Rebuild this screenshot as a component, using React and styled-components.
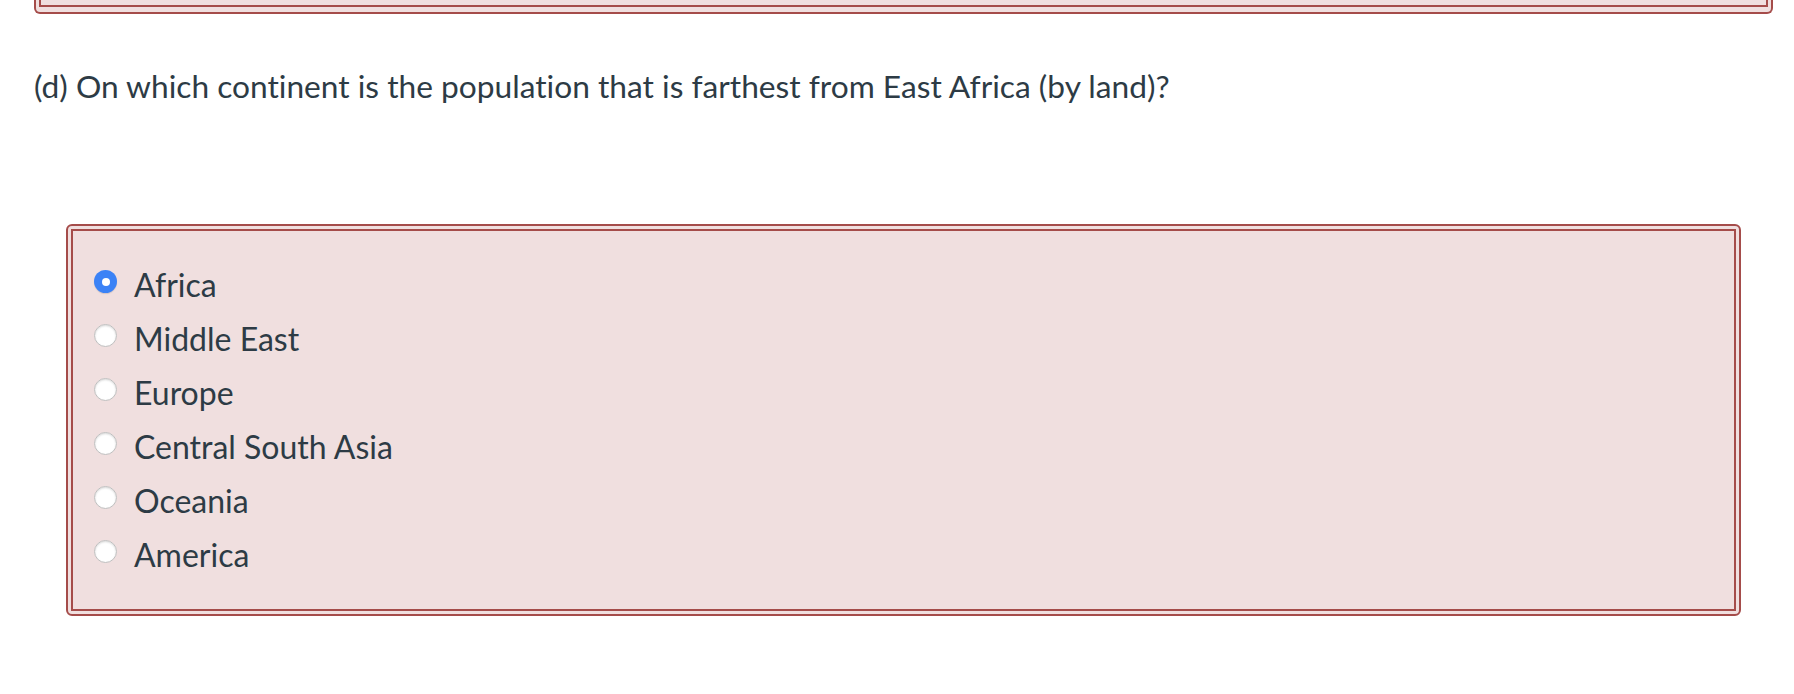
import React, { useState } from 'react';
import styled, { createGlobalStyle } from 'styled-components';

const GlobalStyle = createGlobalStyle`
  body {
    margin: 0;
    background: #fff;
    font-family: 'Lato', 'Noto Sans', sans-serif;
    font-variant-ligatures: none;
    color: #2d3b45;
  }
`;

const Page = styled.div`
  padding: 0 21px 0 34px;
`;

const Frame = styled.div`
  border: 2px solid #a54c4a;
  border-radius: 6px;
  background: #f0dfdf;
  padding: 3px;
`;

const PrevFrame = styled(Frame)`
  border-top: none;
  border-radius: 0 0 6px 6px;
  padding-top: 0;
  height: 9px;
`;

const Inner = styled.div`
  border: 2px solid #a54c4a;
  background: #f0dfdf;
`;

const PrevInner = styled(Inner)`
  border-top: none;
  height: 5px;
`;

const Question = styled.p`
  margin: 52px 0 0;
  font-size: 31.7px;
  line-height: 40px;
`;

const AnswerFrame = styled(Frame)`
  margin: 118px 32px 0;
`;

const OptionList = styled.div`
  padding: 26px 21px 28px;
  display: flex;
  flex-direction: column;
`;

const Option = styled.label`
  display: flex;
  align-items: center;
  height: 54px;
  font-size: 32px;
  cursor: pointer;
`;

const Radio = styled.span`
  box-sizing: border-box;
  width: 23px;
  height: 23px;
  border-radius: 50%;
  margin: -5px 17px 0 0;
  flex-shrink: 0;
  background: ${(p) => (p.$checked ? '#3b82f6' : '#fff')};
  border: ${(p) => (p.$checked ? 'none' : '1.5px solid #bfbfbf')};
  box-shadow: ${(p) =>
    p.$checked ? '0 1px 1px rgba(0,0,0,0.12)' : 'inset 0 1px 2px rgba(0,0,0,0.15)'};
  display: flex;
  align-items: center;
  justify-content: center;

  &::after {
    content: '';
    display: ${(p) => (p.$checked ? 'block' : 'none')};
    width: 8px;
    height: 8px;
    border-radius: 50%;
    background: #fff;
  }
`;

const options = ['Africa', 'Middle East', 'Europe', 'Central South Asia', 'Oceania', 'America'];

function App() {
  const [selected, setSelected] = useState('Africa');

  return (
    <Page>
      <GlobalStyle />
      <PrevFrame>
        <PrevInner />
      </PrevFrame>
      <Question>(d) On which continent is the population that is farthest from East Africa (by land)?</Question>
      <AnswerFrame>
        <Inner>
          <OptionList>
            {options.map((o) => (
              <Option key={o} onClick={() => setSelected(o)}>
                <Radio $checked={selected === o} />
                {o}
              </Option>
            ))}
          </OptionList>
        </Inner>
      </AnswerFrame>
    </Page>
  );
}

export default App;
